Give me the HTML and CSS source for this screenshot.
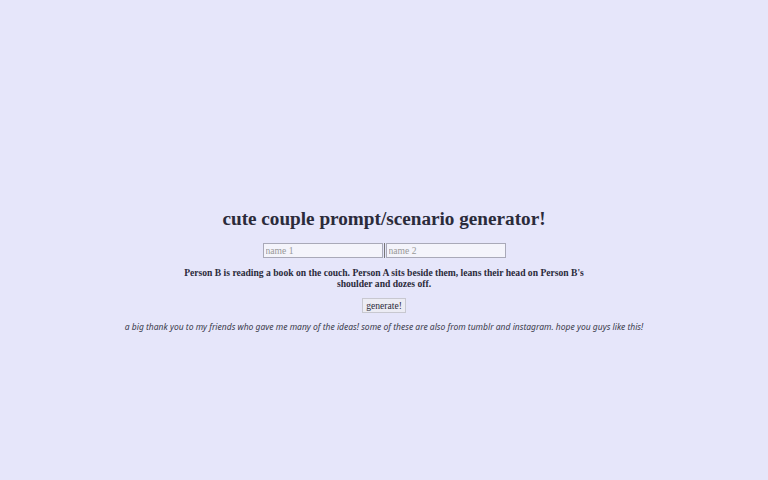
FILE: index.html
```html
<!DOCTYPE html>
<html lang="en">

<head>
  <meta charset="UTF-8">
  <meta name="viewport" content="width=device-width, initial-scale=1.0">
  <title>cute couple prompt/scenario generator!</title>
  <link rel="stylesheet" href="styles.css">
</head>

<body>
  <div class="main">
    <h1 class="title">cute couple prompt/scenario generator!</h1>

    <div class="names">
      <input type="text" id="name1" class="name" placeholder="name 1"><span class="sep"></span><input type="text" id="name2" class="name" placeholder="name 2">
    </div>

    <p id="prompt" class="prompt">Person B is reading a book on the couch. Person A sits beside them, leans their head on Person B's shoulder and dozes off.</p>

    <button id="gen" class="gen">generate!</button>

    <p class="thanks">a big thank you to my friends who gave me many of the ideas! some of these are also from tumblr and instagram. hope you guys like this!</p>
  </div>
</body>

</html>
```
FILE: styles.css
```css
body {
  margin: 0;
  background-color: #e6e6fa;
  color: #2b2b3a;
  font-family: "Liberation Serif", "Times New Roman", serif;
}

.main {
  display: flex;
  flex-direction: column;
  align-items: center;
  padding-top: 208px;
}

.title {
  margin: 0;
  font-size: 19.2px;
  line-height: 22px;
  font-weight: bold;
}

.names {
  display: flex;
  align-items: center;
  margin-top: 13px;
}

.name {
  box-sizing: border-box;
  width: 120px;
  height: 15px;
  padding: 0 2px;
  border: 1px solid #a9a9b8;
  background-color: #f4f4fb;
  font-family: "Liberation Serif", serif;
  font-size: 9.6px;
  color: #333;
}

.name::placeholder {
  font-family: "Liberation Serif", serif;
  color: #999;
}

.sep {
  width: 1px;
  height: 15px;
  margin: 0 1px;
  background-color: #777;
}

.prompt {
  width: 410px;
  margin: 9px 0 0;
  font-size: 9.6px;
  line-height: 11px;
  font-weight: bold;
  text-align: center;
}

.gen {
  margin-top: 9px;
  height: 15px;
  padding: 0 3px;
  border: 1px solid #c8c8d0;
  background-color: #ececf4;
  color: #2b2b3a;
  font-family: "Liberation Serif", serif;
  font-size: 9.6px;
  line-height: 13px;
}

.thanks {
  margin: 9px 0 0;
  font-family: "Noto Sans", sans-serif;
  font-style: italic;
  font-size: 8.5px;
  line-height: 10px;
  color: #3a3a4a;
}
```
